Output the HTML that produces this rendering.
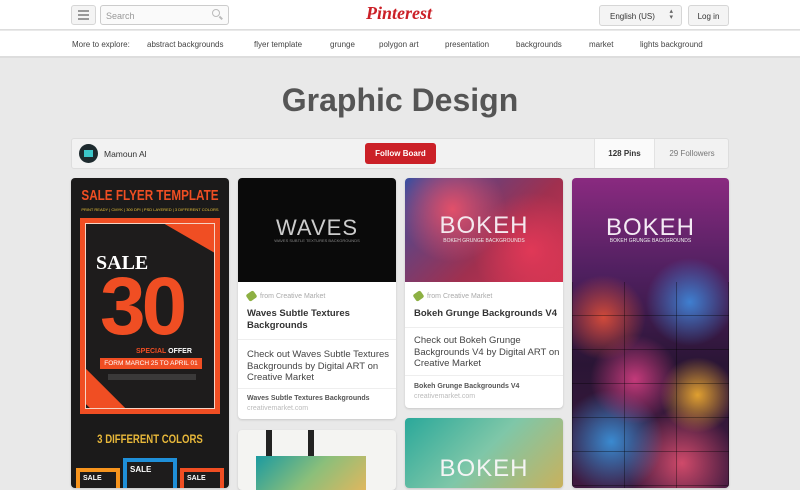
<!DOCTYPE html>
<html><head><meta charset="utf-8"><style>
*{margin:0;padding:0;box-sizing:border-box}
body{width:800px;height:484px;overflow:hidden;background:#e9e9e9;font-family:"Liberation Sans",Arial,sans-serif;position:relative;color:#333}
.abs{position:absolute}
.hdr{left:0;top:0;width:800px;height:30px;background:#fff;border-bottom:1px solid #ddd}
.exp{left:0;top:31px;width:800px;height:27px;background:#fff;border-bottom:2px solid #ddd;font-size:8px;color:#444}
.exp span{position:absolute;top:9px}
.btn{background:#f4f4f4;border:1px solid #d6d6d6;border-radius:3px}
.title{left:0;top:82px;width:800px;text-align:center;font-size:32px;font-weight:bold;color:#555}
.bar{left:71px;top:138px;width:658px;height:31px;background:#f2f2f2;border:1px solid #ddd;border-radius:3px}
.pin{border-radius:4px;overflow:hidden;background:#fff;box-shadow:0 1px 2px rgba(0,0,0,.15)}
.src{font-size:7px;color:#aaa;position:absolute;left:9px;display:flex;align-items:center;gap:4px}
.tag{width:9px;height:8px;background:#8db043;border-radius:2px;transform:rotate(-35deg)}
.t{position:absolute;left:9px;font-size:9.5px;font-weight:bold;color:#333;line-height:12px;white-space:nowrap}
.d{position:absolute;left:9px;font-size:9.5px;color:#444;line-height:11.5px;white-space:nowrap}
.sep{position:absolute;left:0;width:100%;height:1px;background:#eee}
.f1{position:absolute;left:9px;font-size:7px;font-weight:bold;color:#555}
.f2{position:absolute;left:9px;font-size:7px;color:#bbb}
</style></head><body>
<div class="abs hdr"></div>
<div class="abs btn" style="left:71px;top:5px;width:25px;height:20px"></div>
<div class="abs" style="left:78px;top:10px;width:11px;height:2px;background:#999;box-shadow:0 4px 0 #999,0 8px 0 #999"></div>
<div class="abs" style="left:100px;top:5px;width:129px;height:20px;background:#fafafa;border:1px solid #ccc;border-radius:3px;font-size:9px;color:#999;padding:5px 5px">Search</div>
<div class="abs" style="left:212px;top:9px;width:8px;height:8px;border:1.5px solid #bbb;border-radius:50%"></div>
<div class="abs" style="left:219px;top:17px;width:4px;height:1.5px;background:#bbb;transform:rotate(45deg)"></div>
<div class="abs" style="left:366px;top:3px;font-family:'Liberation Serif',serif;font-style:italic;font-weight:bold;font-size:18px;color:#cb2027">Pinterest</div>
<div class="abs btn" style="left:599px;top:5px;width:83px;height:21px;font-size:8px;color:#333;padding:6px 10px">English (US)<span style="position:absolute;right:8px;top:3px;font-size:7px;color:#666;line-height:6px">▴<br>▾</span></div>
<div class="abs btn" style="left:688px;top:5px;width:41px;height:21px;font-size:8px;color:#333;padding:6px 0;text-align:center">Log in</div>
<div class="abs exp">
<span style="left:72px">More to explore:</span><span style="left:147px">abstract backgrounds</span><span style="left:254px">flyer template</span><span style="left:330px">grunge</span><span style="left:379px">polygon art</span><span style="left:445px">presentation</span><span style="left:516px">backgrounds</span><span style="left:589px">market</span><span style="left:640px">lights background</span>
</div>
<div class="abs title">Graphic Design</div>
<div class="abs bar">
<div class="abs" style="left:7px;top:5px;width:19px;height:19px;border-radius:50%;background:#1d2a2e"><div style="position:absolute;left:5px;top:6px;width:9px;height:7px;background:#3cc6c9"></div></div>
<div class="abs" style="left:32px;top:10px;font-size:8.5px;color:#333">Mamoun Al</div>
<div class="abs" style="left:293px;top:4px;width:71px;height:21px;background:#cb2027;border-radius:3px;color:#fff;font-size:8px;font-weight:bold;text-align:center;line-height:21px">Follow Board</div>
<div class="abs" style="left:522px;top:0;width:60px;height:29px;background:#fafafa;border-left:1px solid #e2e2e2;font-size:8px;font-weight:bold;text-align:center;line-height:29px">128 Pins</div>
<div class="abs" style="left:582px;top:0;width:75px;height:29px;border-left:1px solid #e2e2e2;font-size:8px;color:#777;text-align:center;line-height:29px">29 Followers</div>
</div>

<!-- pin 1 -->
<div class="abs pin" style="left:71px;top:178px;width:158px;height:310px;background:#1b1a1a">
<div class="abs" style="left:-40px;top:9px;width:238px;text-align:center;color:#f04e23;font-weight:bold;font-size:15px;transform:scaleX(.78);white-space:nowrap">SALE FLYER TEMPLATE</div>
<div class="abs" style="left:0;top:29px;width:158px;text-align:center;color:#e8c23a;font-size:4px">PRINT READY | CMYK | 300 DPI | PSD LAYERED | 3 DIFFERENT COLORS</div>
<div class="abs" style="left:9px;top:40px;width:140px;height:196px;background:#f04e23;padding:5px">
<div style="position:relative;width:130px;height:186px;background:#1e1c1c;border:1.5px solid #f6d3c4;overflow:hidden">
<div class="abs" style="left:50px;top:-20px;width:100px;height:30px;background:#f04e23;transform:rotate(30deg)"></div>
<div class="abs" style="left:-30px;top:170px;width:100px;height:25px;background:#f04e23;transform:rotate(45deg)"></div>
<div class="abs" style="left:10px;top:28px;color:#fff;font-family:'Liberation Serif',serif;font-weight:bold;font-size:20px">SALE</div>
<div class="abs" style="left:14px;top:36px;color:#f04e23;font-weight:bold;font-size:82px;letter-spacing:-4px">30</div>
<div class="abs" style="left:50px;top:124px;color:#f04e23;font-weight:bold;font-size:7px">SPECIAL <span style="color:#fff">OFFER</span></div>
<div class="abs" style="left:14px;top:134px;width:102px;height:11px;background:#f04e23;color:#fff;font-size:6.5px;text-align:center;line-height:11px">FORM MARCH 25 TO APRIL 01</div>
<div class="abs" style="left:22px;top:150px;width:88px;height:6px;background:#555;opacity:.5"></div>
</div></div>
<div class="abs" style="left:-20px;top:254px;width:198px;text-align:center;color:#e8b83a;font-weight:bold;font-size:12px;transform:scaleX(.8)">3 DIFFERENT COLORS</div>
<div class="abs" style="left:5px;top:290px;width:44px;height:30px;background:#f7941d"></div>
<div class="abs" style="left:52px;top:280px;width:54px;height:30px;background:#1f8fd8"></div>
<div class="abs" style="left:109px;top:290px;width:44px;height:30px;background:#f04e23"></div>
<div class="abs" style="left:56px;top:284px;width:46px;height:30px;background:#1e1c1c;color:#fff;font-size:8px;font-weight:bold;padding:3px">SALE</div>
<div class="abs" style="left:9px;top:294px;width:36px;height:30px;background:#1e1c1c;color:#fff;font-size:7px;font-weight:bold;padding:3px">SALE</div>
<div class="abs" style="left:113px;top:294px;width:36px;height:30px;background:#1e1c1c;color:#fff;font-size:7px;font-weight:bold;padding:3px">SALE</div>
</div>

<!-- pin 2 -->
<div class="abs pin" style="left:238px;top:178px;width:158px;height:241px">
<div class="abs" style="left:0;top:0;width:158px;height:104px;background:#0a0a0a"><div style="position:absolute;top:37px;width:158px;text-align:center;color:#ccc;font-size:22px;letter-spacing:1px">WAVES</div><div style="position:absolute;top:60px;width:158px;text-align:center;color:#888;font-size:4px">WAVES SUBTLE TEXTURES BACKGROUNDS</div></div>
<div class="src" style="top:114px"><div class="tag"></div>from Creative Market</div>
<div class="t" style="top:130px">Waves Subtle Textures<br>Backgrounds</div>
<div class="sep" style="top:161px"></div>
<div class="d" style="top:171px">Check out Waves Subtle Textures<br>Backgrounds by Digital ART on<br>Creative Market</div>
<div class="sep" style="top:210px"></div>
<div class="f1" style="top:217px">Waves Subtle Textures Backgrounds</div>
<div class="f2" style="top:227px">creativemarket.com</div>
</div>
<div class="abs pin" style="left:238px;top:430px;width:158px;height:60px;background:#f4f4f2">
<div class="abs" style="left:28px;top:0;width:6px;height:30px;border:3px solid #222;border-bottom:none"></div>
<div class="abs" style="left:70px;top:0;width:6px;height:30px;border:3px solid #222;border-bottom:none"></div>
<div class="abs" style="left:18px;top:26px;width:110px;height:40px;background:linear-gradient(135deg,#1b9aa0,#8cbf7a 50%,#e6b65c)"></div>
</div>

<!-- pin 3 -->
<div class="abs pin" style="left:405px;top:178px;width:158px;height:230px">
<div class="abs" style="left:0;top:0;width:158px;height:104px;background:radial-gradient(circle at 30% 30%,#e2506a,transparent 40%),radial-gradient(circle at 80% 70%,#e03857,transparent 40%),linear-gradient(135deg,#3c4fa0,#a0304f 60%,#d1344f)"><div style="position:absolute;top:34px;width:158px;text-align:center;color:#f4e8ee;font-size:24px;letter-spacing:1px">BOKEH</div><div style="position:absolute;top:60px;width:158px;text-align:center;color:#eee;font-size:5px">BOKEH GRUNGE BACKGROUNDS</div></div>
<div class="src" style="top:114px"><div class="tag"></div>from Creative Market</div>
<div class="t" style="top:130px">Bokeh Grunge Backgrounds V4</div>
<div class="sep" style="top:149px"></div>
<div class="d" style="top:157px">Check out Bokeh Grunge<br>Backgrounds V4 by Digital ART on<br>Creative Market</div>
<div class="sep" style="top:197px"></div>
<div class="f1" style="top:205px">Bokeh Grunge Backgrounds V4</div>
<div class="f2" style="top:215px">creativemarket.com</div>
</div>
<div class="abs pin" style="left:405px;top:418px;width:158px;height:70px;background:linear-gradient(135deg,#2aa89a,#7fc7a8 50%,#c9b15c)"><div style="position:absolute;top:37px;width:158px;text-align:center;color:#f4f4f4;font-size:24px;letter-spacing:1px">BOKEH</div></div>

<!-- pin 4 -->
<div class="abs pin" style="left:572px;top:178px;width:157px;height:310px;background:radial-gradient(circle at 20% 45%,#d14a3a,transparent 20%),radial-gradient(circle at 75% 40%,#3f7fd0,transparent 20%),radial-gradient(circle at 40% 65%,#c43a7a,transparent 20%),radial-gradient(circle at 80% 70%,#e0a030,transparent 15%),radial-gradient(circle at 25% 85%,#3a8ad0,transparent 18%),radial-gradient(circle at 70% 92%,#d04a6a,transparent 18%),linear-gradient(180deg,#8a2a80 0%,#502060 30%,#2a1535 60%,#401a40)">
<div style="position:absolute;top:36px;width:157px;text-align:center;color:#f4eaf4;font-size:24px;letter-spacing:1px">BOKEH</div>
<div style="position:absolute;top:60px;width:157px;text-align:center;color:#eee;font-size:5px">BOKEH GRUNGE BACKGROUNDS</div>
<div style="position:absolute;left:0;top:104px;width:157px;height:206px;background-image:linear-gradient(90deg,rgba(0,0,0,.35) 1px,transparent 1px),linear-gradient(0deg,rgba(0,0,0,.35) 1px,transparent 1px);background-size:52px 34px"></div>
</div>
</body></html>
